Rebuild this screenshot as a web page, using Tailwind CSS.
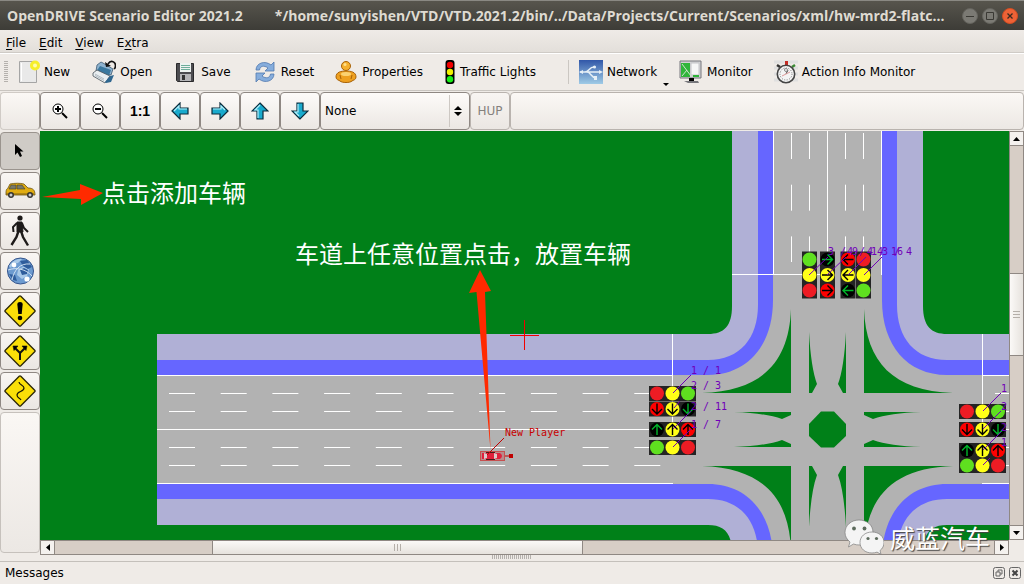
<!DOCTYPE html>
<html lang="en">
<head>
    <meta charset="UTF-8" />
    <title>OpenDRIVE Scenario Editor 2021.2</title>
    <script src="https://cdn.jsdelivr.net/npm/@tailwindcss/browser@4"></script>
</head>
<body class="h-screen flex flex-col overflow-hidden bg-[#efebe7] text-black text-xs font-['DejaVu_Sans','Noto_Sans_CJK_SC',sans-serif]">

    <!-- Title bar -->
    <header class="h-[30px] shrink-0 flex items-center gap-2 pl-[7px] pr-[6px] border-t border-[#8a8983] bg-linear-to-b from-[#57554d] to-[#3d3c37] text-[#dfdbd2]">
        <h1 class="flex-1 min-w-0 flex gap-8 whitespace-nowrap overflow-hidden text-sm font-bold font-['Open_Sans','Noto_Sans',sans-serif]">
            <span>OpenDRIVE Scenario Editor 2021.2</span>
            <span>*/home/sunyishen/VTD/VTD.2021.2/bin/../Data/Projects/Current/Scenarios/xml/hw-mrd2-flatc...</span>
        </h1>
        <div class="flex gap-1 shrink-0">
            <button aria-label="Minimize" class="size-4 rounded-full bg-[#7b7a74] border border-[#65645e]">
                <svg class="block size-[14px]" viewBox="0 0 14 14" stroke="#3a3934"><path d="M3 7.5h8" /></svg>
            </button>
            <button aria-label="Maximize" class="size-4 rounded-full bg-[#7b7a74] border border-[#65645e]">
                <svg class="block size-[14px]" viewBox="0 0 14 14" fill="none" stroke="#3a3934"><path d="M3.5 3.5h7v7h-7z" /></svg>
            </button>
            <button aria-label="Close" class="size-4 rounded-full bg-[#ee6236] border border-[#d34d22]">
                <svg class="block size-[14px]" viewBox="0 0 14 14" stroke="#3a2a20" stroke-width="1.3"><path d="M4.5 4.5l5 5M9.5 4.5l-5 5" /></svg>
            </button>
        </div>
    </header>

    <!-- Menu -->
    <nav class="h-[23px] shrink-0 flex items-center gap-[13px] pl-[6px] pt-1 border-b border-[#cfcbc6] bg-linear-to-b from-[#efebe7] to-[#e3dfda]">
        <button><span class="underline underline-offset-2">F</span>ile</button>
        <button><span class="underline underline-offset-2">E</span>dit</button>
        <button><span class="underline underline-offset-2">V</span>iew</button>
        <button>E<span class="underline underline-offset-2">x</span>tra</button>
    </nav>

    <!-- Main toolbar -->
    <div class="h-[38px] shrink-0 flex items-stretch border-t border-t-white border-b border-b-[#c9c5c0] pl-1">
        <svg class="w-1 h-[22px] my-auto -mr-[3px]" viewBox="0 0 4 22" stroke="#b5b1ad" stroke-width="4" stroke-dasharray="1 1"><path d="M2 0v22" /></svg>
        <button class="flex items-center gap-1 px-[11px]">
            <svg class="size-6" viewBox="0 0 24 24">
                <path d="M3.5 1.5h17v21h-17z" fill="#e9e9e9" stroke="#a5a5a5" />
                <path d="M5 3h1v18H5z" fill="#fff" />
                <circle cx="19" cy="5.5" r="5" fill="#f6ee2a" /><circle cx="19" cy="5.5" r="2" fill="#fffbb0" />
            </svg>New
        </button>
        <button class="flex items-center gap-1 px-[11px]">
            <svg class="size-6" viewBox="0 0 24 24">
                <path d="M5 5l4-3 2 1 10 6-2 6L4 11z" fill="#8fb3cf" stroke="#3d5a73" stroke-width=".8" />
                <path d="M8 6l11 4-3 8L4 12z" fill="#3a789f" />
                <path d="M1 13l4-3 13 6-5 7L1 16z" fill="#e9eef1" stroke="#47525b" stroke-width=".8" />
                <path d="M13 22l5-6 4-1-3 7-5 1z" fill="#2f6790" />
                <path d="M3 14l9 5M3 15.5l9 5" stroke="#9aa5ad" stroke-width=".7" />
                <path d="M16 4c3-5 9-2 7 4l-1 1" fill="none" stroke="#111" stroke-width="1.6" />
                <path d="M13 2l1 5 5-1z" fill="#111" />
            </svg>Open
        </button>
        <button class="flex items-center gap-1 pl-[10px] pr-[11px]">
            <svg class="size-6" viewBox="0 0 24 24">
                <path d="M3.5 3.5h17v18h-16l-1-1z" fill="#4c4c50" stroke="#2a2a2c" />
                <path d="M7 3h11v9H7z" fill="#eef3f1" />
                <path d="M8 5.5h9M8 7.5h9M8 9.5h9" stroke="#6fae9b" />
                <path d="M7 14h11v7H7z" fill="#b5b5b8" /><path d="M9 15h3v5H9z" fill="#333" />
            </svg>Save
        </button>
        <button class="flex items-center gap-1 px-[11px]">
            <svg class="size-6" viewBox="0 0 24 24" fill="#86addc" stroke="#5279ae" stroke-width=".8" stroke-linejoin="round">
                <path d="M3 10C3 3 12 0 18 5l3-3v9h-9l3-3C11 5 7 6 6.5 10z" />
                <path d="M21 14c0 7-9 10-15 5l-3 3v-9h9l-3 3c4 3 8 2 8.5-2z" />
            </svg>Reset
        </button>
        <button class="flex items-center gap-1 pl-[9px] pr-[11px]">
            <svg class="size-6" viewBox="0 0 24 24">
                <path d="M2 17c0-5 5-6 10-6s10 1 10 6c0 3-3 3-4 4-2 2-10 2-12 0-1-1-4-1-4-4z" fill="#eea020" stroke="#a86208" />
                <path d="M6 15l1 4M18 15l-1 4" fill="none" stroke="#a86208" />
                <circle cx="12" cy="6" r="4.5" fill="#f5b02e" stroke="#a86208" />
                <circle cx="11" cy="4.5" r="1.5" fill="#fde08c" /><ellipse cx="12" cy="14" rx="5" ry="2" fill="#fbd272" />
            </svg>Properties
        </button>
        <button class="flex items-center gap-1 pl-[10px] pr-[11px]">
            <svg class="w-3 h-6" viewBox="0 0 12 24">
                <rect x="1.5" width="9" height="24" rx="3" />
                <circle cx="6" cy="5" r="3.2" fill="#f00000" /><circle cx="6" cy="12" r="3.2" fill="#f2f200" /><circle cx="6" cy="19.2" r="3.2" fill="#18f018" />
            </svg>Traffic Lights
        </button>
        <div class="w-px h-6 my-auto ml-[21px] -mr-px bg-[#cbc7c2]"></div>
        <button class="relative flex items-center gap-1 px-[11px]">
            <svg class="size-6" viewBox="0 0 24 24">
                <defs><linearGradient id="net" x2="0" y2="1"><stop stop-color="#3157a8" /><stop offset="1" stop-color="#9fcbe6" /></linearGradient></defs>
                <path d="M0 0h24v24H0z" fill="url(#net)" />
                <path d="M1 12h21M6 12c4 0 4-5 9-5M8 12c4 0 4 6 9 6" fill="none" stroke="#e6eff6" stroke-width="1.5" />
                <path d="M0 12l4-2v4zM24 12l-4-2v4z" fill="#e6eff6" /><circle cx="15.5" cy="7" r="1.6" fill="#e6eff6" /><path d="M15 16h3v4h-3z" fill="#e6eff6" />
            </svg>Network
            <svg class="absolute -right-px bottom-1 w-[6px] h-[3px]" viewBox="0 0 6 3"><path d="M0 0h6L3 3z" /></svg>
        </button>
        <button class="flex items-center gap-1 px-[11px]">
            <svg class="size-6" viewBox="0 0 24 24">
                <path d="M1 1h21v17H1z" fill="#d2d2d4" stroke="#77777c" />
                <path d="M2 3h9v14H2z" fill="#2fb53a" /><path d="M12 3h8v12h-8z" fill="#f6f6f6" stroke="#c4c4c8" /><path d="M14 15h6v2h-6z" fill="#2fb53a" />
                <path d="M3 4l9 12M8 10l-5 6" stroke="#cfe3cd" />
                <path d="M10 18h5v3h-5z" /><path d="M5 21h14l1 2H9z" fill="#77777c" />
            </svg>Monitor
        </button>
        <button class="flex items-center gap-1 pl-[10px] pr-[11px]">
            <svg class="size-6" viewBox="0 0 24 24">
                <path d="M0 2h24M0 8h24M0 14h24M0 20h24" stroke="#e0e0e0" stroke-width="3" />
                <path d="M3 5l3 2" stroke="#333" stroke-width="2.5" /><path d="M21 5l-3 2" stroke="#3b8a35" stroke-width="2.5" /><path d="M11 1h3v4h-3z" fill="#c52a22" />
                <circle cx="12" cy="14" r="8.7" fill="#f4f4f4" stroke="#444" stroke-width="1.6" />
                <circle cx="12" cy="14" r="6" fill="none" stroke="#777" stroke-dasharray="1 1.5" />
                <path d="M12 14l2-4" stroke="#444" /><path d="M8 16l8-4" stroke="#d99" /><circle cx="12" cy="10" r="1.5" fill="none" stroke="#888" />
            </svg>Action Info Monitor
        </button>
    </div>

    <!-- View toolbar -->
    <div class="h-10 shrink-0 flex pt-px pb-px *:h-[38px]">
        <div class="w-10 rounded-sm border border-[#d0cbc6] border-r-[#9c958f] bg-linear-to-b from-[#fbf8f5] to-[#ece8e4]"></div>
        <button aria-label="Zoom in" class="w-10 grid place-items-center rounded-sm border border-[#8f8883] bg-linear-to-b from-[#fdfbf9] to-[#ebe7e3]">
            <svg class="size-4" viewBox="0 0 16 16" fill="none" stroke="#000"><circle cx="6" cy="6" r="5" fill="#fff" /><path d="M10 10l5 5" stroke-width="2" /><path d="M3 6h6M6 3v6" stroke-width="2" /></svg>
        </button>
        <button aria-label="Zoom out" class="w-10 grid place-items-center rounded-sm border border-[#8f8883] bg-linear-to-b from-[#fdfbf9] to-[#ebe7e3]">
            <svg class="size-4" viewBox="0 0 16 16" fill="none" stroke="#000"><circle cx="6" cy="6" r="5" fill="#fff" /><path d="M10 10l5 5" stroke-width="2" /><path d="M3 6h6" stroke-width="2" /></svg>
        </button>
        <button class="w-10 rounded-sm border border-[#8f8883] bg-linear-to-b from-[#fdfbf9] to-[#ebe7e3] text-sm font-bold font-['Liberation_Sans',sans-serif]">1:1</button>
        <button aria-label="Left" class="w-10 grid place-items-center rounded-sm border border-[#8f8883] bg-linear-to-b from-[#fdfbf9] to-[#ebe7e3]">
            <svg class="size-[18px]" viewBox="0 0 18 18"><path id="dir" d="M1 9l8-8v5h8v6H9v5z" fill="#19aacd" stroke="#0c2c3c" stroke-width="1.2" /><path d="M3 9l5-5v3h8" fill="none" stroke="#b4edf8" stroke-width="1.2" /></svg>
        </button>
        <button aria-label="Right" class="w-10 grid place-items-center rounded-sm border border-[#8f8883] bg-linear-to-b from-[#fdfbf9] to-[#ebe7e3]">
            <svg class="size-[18px]" viewBox="0 0 18 18"><use href="#dir" transform="rotate(180 9 9)" /><path d="M2 7h8V4l4 4" fill="none" stroke="#b4edf8" stroke-width="1.2" /></svg>
        </button>
        <button aria-label="Up" class="w-10 grid place-items-center rounded-sm border border-[#8f8883] bg-linear-to-b from-[#fdfbf9] to-[#ebe7e3]">
            <svg class="size-[18px]" viewBox="0 0 18 18"><use href="#dir" transform="rotate(90 9 9)" /><path d="M9 3L4 8h3v8" fill="none" stroke="#b4edf8" stroke-width="1.2" /></svg>
        </button>
        <button aria-label="Down" class="w-10 grid place-items-center rounded-sm border border-[#8f8883] bg-linear-to-b from-[#fdfbf9] to-[#ebe7e3]">
            <svg class="size-[18px]" viewBox="0 0 18 18"><use href="#dir" transform="rotate(-90 9 9)" /><path d="M7 2v8H4l4 4" fill="none" stroke="#b4edf8" stroke-width="1.2" /></svg>
        </button>
        <div class="relative w-[150px]">
            <select aria-label="Selection" class="appearance-none size-full pl-1 rounded-sm border border-[#8f8883] bg-linear-to-b from-[#fdfbf9] to-[#ebe7e3]">
                <option>None</option>
            </select>
            <svg class="absolute right-2 top-[14px] w-2 h-[10px] pointer-events-none" viewBox="0 0 8 10"><path d="M4 0l4 4H0zM4 10L0 6h8z" /></svg>
            <div class="absolute right-5 inset-y-[3px] w-px bg-[#cdc8c3] pointer-events-none"></div>
        </div>
        <button disabled class="w-10 rounded-sm border border-[#b9b3ae] bg-linear-to-b from-[#f8f5f2] to-[#ebe7e3] text-[#85817d]">HUP</button>
        <div class="flex-1 rounded-sm border border-[#b9b3ae] bg-linear-to-b from-[#fbf8f5] to-[#ece8e4]"></div>
    </div>

    <main class="flex-1 min-h-0 flex">
        <!-- Tools -->
        <aside class="w-10 shrink-0 flex flex-col gap-[2px] pt-px pb-[2px]">
            <button aria-label="Select" class="h-[38px] grid place-items-center rounded-sm border border-[#9a948e] bg-[#cfcbc6]">
                <svg class="size-6" viewBox="0 0 24 24"><path d="M7 5v11l2.5-2.5L12 18l2-1-2-4.5h3.5z" /></svg>
            </button>
            <button aria-label="Add vehicle" class="h-[38px] grid place-items-center rounded-sm border border-[#8f8883] bg-linear-to-b from-[#f9f6f3] to-[#ebe7e3]">
                <svg class="w-8 h-5" viewBox="0 0 32 20">
                    <path d="M2 12c0-4 1-4 2-5l2-4c5-1 10-1 14 0l4 4c5 0 7 2 7 7H2z" fill="#e0ac12" stroke="#6d5410" stroke-width=".8" />
                    <path d="M7 4h5v4H5zM13 4h5l3 4h-8z" fill="#77786a" stroke="#4b421d" stroke-width=".6" />
                    <path d="M2 13h28" stroke="#7c6116" /><circle cx="7" cy="14" r="3" fill="#333" /><circle cx="26" cy="14" r="3" fill="#333" /><circle cx="7" cy="14" r="1.5" fill="#ccc" /><circle cx="26" cy="14" r="1.5" fill="#ccc" />
                </svg>
            </button>
            <button aria-label="Add pedestrian" class="h-[38px] grid place-items-center rounded-sm border border-[#8f8883] bg-linear-to-b from-[#f9f6f3] to-[#ebe7e3]">
                <svg class="size-8" viewBox="0 0 32 32" fill="none" stroke="#1d1a19"><circle cx="16" cy="3" r="2.6" fill="#1d1a19" stroke="none" /><path d="M13 7h5l1 10h-6z" fill="#1d1a19" /><path d="M13 8l-4 4 .5 5M18 8l2 5 4 4" stroke-width="2" /><path d="M14.5 16l-2 6-5 8M17 16l2 6 5 8.5" stroke-width="2.4" /></svg>
            </button>
            <button aria-label="Environment" class="h-[38px] grid place-items-center rounded-sm border border-[#8f8883] bg-linear-to-b from-[#f9f6f3] to-[#ebe7e3]">
                <svg class="size-7" viewBox="0 0 28 28">
                    <circle cx="14.5" cy="14" r="13" fill="#6d9bd0" stroke="#36558c" />
                    <path d="M3 9c4-7 10-7 13-7l-4 4-5 1-2 4zM12 13l6-4 5 3-2 7-5 3-5-4z" fill="#a9c9e8" />
                    <path d="M14 4l7-1 5 7-4 2-5-3zM14 13l4-2 4 2-1 4-5 1zM3 17l6 1 2 6-4-1z" fill="#2f5d9c" />
                    <path d="M2 13c8-3 18-1 24 6M6 23C8 13 14 6 24 7" fill="none" stroke="#dbe9f5" stroke-width=".9" />
                    <circle cx="8" cy="8" r="2.4" fill="#fff" /><circle cx="21" cy="22" r="2.6" fill="#fff" />
                </svg>
            </button>
            <button aria-label="Trigger" class="h-[38px] grid place-items-center rounded-sm border border-[#8f8883] bg-linear-to-b from-[#f9f6f3] to-[#ebe7e3]">
                <svg class="size-8" viewBox="0 0 32 32"><path id="sign" d="M15.2 1.3q.8-.8 1.6 0l13.9 13.9q.8.8 0 1.6L16.8 30.7q-.8.8-1.6 0L1.3 16.8q-.8-.8 0-1.6z" fill="#fbdf08" stroke="#2b2606" stroke-width="1.3" /><path d="M13.3 9q0-2 2.7-2t2.7 2l-1 10h-3.4z" /><circle cx="16" cy="23" r="2.3" /></svg>
            </button>
            <button aria-label="Path" class="h-[38px] grid place-items-center rounded-sm border border-[#8f8883] bg-linear-to-b from-[#f9f6f3] to-[#ebe7e3]">
                <svg class="size-8" viewBox="0 0 32 32"><use href="#sign" /><path d="M16 25v-7l-5-5M16 18l5-5" fill="none" stroke="#111" stroke-width="2" /><path d="M9 11h5l-4 4.5zM23 11h-5l4 4.5z" stroke="#111" stroke-width=".6" /></svg>
            </button>
            <button aria-label="Route" class="h-[38px] grid place-items-center rounded-sm border border-[#8f8883] bg-linear-to-b from-[#f9f6f3] to-[#ebe7e3]">
                <svg class="size-8" viewBox="0 0 32 32"><use href="#sign" /><path d="M15 7c0 3 5 3 5 6 0 4-7 3-7 7 0 3 3 3 4 5" fill="none" stroke="#1a1704" stroke-width="1.2" /></svg>
            </button>
            <div class="flex-1 rounded-sm border border-[#c6c1bc] bg-linear-to-b from-[#faf7f4] to-[#ece8e4]"></div>
        </aside>

        <div class="relative flex-1 min-w-0 flex flex-col">
            <div class="flex-1 min-h-0 flex">
                <!-- Map -->
                <svg class="flex-1 min-w-0 h-full bg-[#008018]" viewBox="40 131 969 409" preserveAspectRatio="xMinYMin slice">
                    <defs>
                        <!-- one quarter of the junction, mirrored around 827.5 / 429.5 -->
                        <g id="quarter">
                            <path d="M157 430V334H708C724 334 732 326 732 306V131H828V430z" fill="#b0b0d6" />
                            <path d="M157 430V360H708C740 360 758 338 758 305V131H828V430z" fill="#6666ff" />
                            <path d="M157 430V375H708C748 375 773 345 773 300V131H828V430z" fill="#b2b2b2" />
                            <path d="M791 309C789 362 762 391 702 393H791zM734 412H791V415L782 419Q765 413 734 412zM809 332V393H812L817 384Q811 368 809 332z" fill="#008018" />
                        </g>
                        <circle id="r" r="7" fill="#ed1c24" />
                        <circle id="y" r="7" fill="#ffff18" />
                        <circle id="g" r="7" fill="#5fe01f" />
                        <path id="up" d="M0 5.5V-5M-5 0L0-5 5 0" fill="none" stroke-width="1.4" />
                        <g id="ra"><circle r="7" fill="#f00" /><use href="#up" stroke="#000" /></g>
                        <g id="ya"><circle r="7" fill="#ffff18" /><use href="#up" stroke="#000" /></g>
                        <g id="ga"><circle r="7" fill="#000" /><use href="#up" stroke="#00b52a" /></g>
                        <path id="box" d="M-23.5-7.5h47v15h-47z" fill="#242424" />
                        <!-- lamps in a row: round ones, and ones with an arrow -->
                        <g id="round"><use href="#box" /><use href="#r" x="-15.5" /><use href="#y" /><use href="#g" x="15.5" /></g>
                        <g id="arrow"><use href="#box" /><use href="#ga" x="-15.5" /><use href="#ya" /><use href="#ra" x="15.5" /></g>
                    </defs>

                    <use href="#quarter" />
                    <use href="#quarter" transform="matrix(-1 0 0 1 1655 0)" />
                    <use href="#quarter" transform="matrix(1 0 0 -1 0 859)" />
                    <use href="#quarter" transform="matrix(-1 0 0 -1 1655 859)" />
                    <path d="M821 411.5H834L846 424V436L834 447.5H821L809 436V424z" fill="#008018" />

                    <!-- lane marks -->
                    <g stroke="#fff" fill="none">
                        <path d="M157 375.5H673M157 429.5H660M157 483.5H673M672.5 334V430" />
                        <path d="M773.5 131V275M827.5 131V252M881.5 131V275M732 274.5H828" />
                        <path d="M982.5 334V430M982 375.5H1009M995 393.5H1009M1003 411.5H1009M1003 429.5H1009M1003 447.5H1009M1003 465.5H1009M982 483.5H1009" />
                        <path d="M169 393.5H662M169 411.5H662M169 447.5H662M169 465.5H662" stroke-dasharray="26 25.7" />
                        <path d="M791.5 133V262M809.5 133V262M845.5 133V262M863.5 133V262" stroke-dasharray="26 25.7" />
                    </g>

                    <!-- signals -->
                    <use href="#round" transform="translate(672.5 393.5)" />
                    <use href="#arrow" transform="translate(672.5 409) rotate(180)" />
                    <use href="#arrow" transform="translate(672.5 429.5)" />
                    <use href="#round" transform="translate(672.5 447.5) rotate(180)" />
                    <use href="#round" transform="translate(982.5 411.5)" />
                    <use href="#arrow" transform="translate(982.5 429.5) rotate(180)" />
                    <use href="#arrow" transform="translate(982.5 450.5)" />
                    <use href="#round" transform="translate(982.5 465.5) rotate(180)" />
                    <use href="#round" transform="translate(809.5 275) rotate(-90)" />
                    <use href="#arrow" transform="translate(827.5 275) rotate(90)" />
                    <use href="#arrow" transform="translate(848 275) rotate(-90)" />
                    <use href="#round" transform="translate(863.5 275) rotate(90)" />

                    <g stroke="#7000b8" fill="none">
                        <path d="M673 393L691 375M674 408L680 401M673 429L691 411M673 447L691 429" />
                        <path d="M983 411L1001 393M983 429L1001 411M983 450L1001 432M983 465L990 458" />
                        <path d="M809 275L828 257M827 275L846 257M848 275L866 257M864 275L882 257" />
                    </g>
                    <g class="text-[10px] font-['DejaVu_Sans_Mono',monospace]" fill="#7000b8">
                        <text x="691" y="374">1 / 1</text>
                        <text x="691" y="389">2 / 3</text>
                        <text x="691" y="410">2 / 11</text>
                        <text x="691" y="428">1 / 7</text>
                        <text x="828" y="255">3 / 9</text>
                        <text x="847" y="255">4 / 14</text>
                        <text x="867" y="255">4 / 16</text>
                        <text x="882" y="255">3 / 4</text>
                        <text x="1001" y="392">1</text>
                        <text x="1001" y="410">2</text>
                        <text x="1001" y="431">2</text>
                        <text x="1001" y="446">1</text>
                    </g>

                    <!-- cursor cross and player -->
                    <path d="M510 335.5H539M524.5 320V350" stroke="#f00000" />
                    <path d="M42 197L80 190V184L103 193L81 205V199z" fill="#ff2a00" />
                    <path d="M490.5 450L476.5 292L469 293L480 270L491 291L485 292z" fill="#ff2a00" />
                    <rect x="480.5" y="451.5" width="24" height="9" fill="#b98a8a" stroke="#c65050" />
                    <path d="M482 453h18q4 3 0 6h-18z" fill="#e0203c" />
                    <path d="M484 453l3 1v4l-3 1zM494 453l3 1v4l-3 1z" fill="#dcc9c9" />
                    <path d="M486 452.5h9M486 459.5h9" stroke="#4a1818" />
                    <path d="M487 455L504 438M505 456H509" stroke="#c00000" />
                    <path d="M509 454h4v4h-4z" fill="#c00000" />
                    <text x="505" y="436" fill="#c80000" class="text-[10px] font-['DejaVu_Sans_Mono',monospace]">New Player</text>

                    <g class="text-2xl font-['Noto_Sans_CJK_SC',sans-serif]" fill="#fff">
                        <text x="102" y="202">点击添加车辆</text>
                        <text x="295" y="263">车道上任意位置点击，放置车辆</text>
                    </g>
                </svg>

                <!-- Vertical scroll bar -->
                <div class="w-[15px] shrink-0 flex flex-col border border-[#8f8883] bg-[#d7cec6]">
                    <button aria-label="Scroll up" class="h-[14px] shrink-0 grid place-items-center border-b border-[#8f8883] bg-[#f4f1ee]"><svg class="w-[7px] h-1" viewBox="0 0 7 4"><path d="M3.5 0L7 4H0z" /></svg></button>
                    <div class="basis-[127px] shrink"></div>
                    <div class="h-[83px] shrink-0 flex flex-col justify-center items-center gap-[2px] border-y border-[#8f8883] bg-linear-to-r from-[#fbf9f7] to-[#e6e2dd] *:w-[7px] *:h-px *:bg-[#b5afa9]"><i></i><i></i><i></i></div>
                    <div class="flex-1"></div>
                    <button aria-label="Scroll down" class="h-[14px] shrink-0 grid place-items-center border-t border-[#8f8883] bg-[#f4f1ee]"><svg class="w-[7px] h-1" viewBox="0 0 7 4"><path d="M0 0h7L3.5 4z" /></svg></button>
                </div>
            </div>
            <!-- Horizontal scroll bar -->
            <div class="h-[15px] shrink-0 flex mr-[15px] border border-[#8f8883] bg-[#d7cec6]">
                <button aria-label="Scroll left" class="w-[14px] shrink-0 grid place-items-center border-r border-[#8f8883] bg-[#f4f1ee]"><svg class="w-1 h-[7px]" viewBox="0 0 4 7"><path d="M4 0v7L0 3.5z" /></svg></button>
                <div class="basis-[157px] shrink"></div>
                <div class="w-[371px] shrink-0 flex justify-center items-center gap-[2px] border-x border-[#8f8883] bg-linear-to-b from-[#fbf9f7] to-[#e6e2dd] *:h-[7px] *:w-px *:bg-[#b5afa9]"><i></i><i></i><i></i></div>
                <div class="flex-1"></div>
                <button aria-label="Scroll right" class="w-[14px] shrink-0 grid place-items-center border-l border-[#8f8883] bg-[#f4f1ee]"><svg class="w-1 h-[7px]" viewBox="0 0 4 7"><path d="M0 0v7l4-3.5z" /></svg></button>
            </div>

            <!-- Watermark -->
            <div class="absolute right-[34px] bottom-0 flex items-center gap-[6px] text-white pointer-events-none">
                <svg class="w-10 h-9" viewBox="0 0 40 36" fill="#f4f4f4" stroke="#7d7d7d" stroke-width=".7">
                    <path d="M15 1C7 1 1 6.5 1 13.5c0 4 2 7 5 9.5l-1.500 5 5-3c2 .8 4 1 6.500 1 8 0 13-6 13-12.500C29 6 23 1 15 1z" />
                    <path d="M28 13c-7 0-12 4.500-12 10.500S21 34 28 34c2 0 3.500-.3 5-.9l4 2.200-1-3.700c2.500-2 4-4.700 4-8C40 17.500 35 13 28 13z" />
                    <g fill="#5d6b5d" stroke="none"><circle cx="10" cy="9.500" r="1.9" /><circle cx="20.500" cy="9.500" r="1.9" /><circle cx="24" cy="19.500" r="1.6" /><circle cx="32.500" cy="19.500" r="1.6" /></g>
                </svg>
                <span class="text-[25px] leading-[36px] font-['Noto_Sans_CJK_SC',sans-serif] [text-shadow:1px_1px_1px_#444]">威蓝汽车</span>
            </div>
        </div>
    </main>

    <!-- Messages dock -->
    <div class="h-[6px] shrink-0 flex justify-center items-start">
        <svg class="w-10 h-1" viewBox="0 0 40 4" stroke="#b5b1ad" stroke-width="4" stroke-dasharray="1 1"><path d="M0 2h40" /></svg>
    </div>
    <footer class="h-[23px] shrink-0 flex items-center gap-1 pl-[5px] pr-[3px] border-t border-[#c4c0bb]">
        <h2 class="flex-1">Messages</h2>
        <button aria-label="Float" class="size-3">
            <svg class="block size-3" viewBox="0 0 12 12" fill="none" stroke="#666"><rect x=".5" y=".5" width="11" height="11" rx="2" /><path d="M5 5V3h4v4H7M3 5h4v4H3z" /></svg>
        </button>
        <button aria-label="Close messages" class="size-3">
            <svg class="block size-3" viewBox="0 0 12 12" fill="none" stroke="#666"><rect x=".5" y=".5" width="11" height="11" rx="2" /><path d="M3.5 3.5l5 5M8.5 3.5l-5 5" stroke="#444" stroke-width="2" /></svg>
        </button>
    </footer>
</body>
</html>
